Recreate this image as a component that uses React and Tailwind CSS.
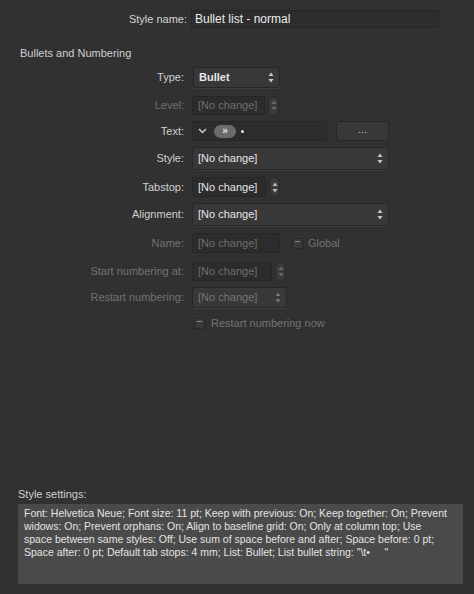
import React from 'react';

const font = { fontFamily: '"Liberation Sans", Arial, sans-serif' };

function UpDown({ className = '' }) {
    return (
        <svg width="6" height="11" viewBox="0 0 6 11" className={className}>
            <path d="M3 0.5 L5.5 4 L0.5 4 Z" fill="currentColor" />
            <path d="M3 10.5 L5.5 7 L0.5 7 Z" fill="currentColor" />
        </svg>
    );
}

function Stepper({ disabled }) {
    return (
        <div className={`ml-[3px] flex h-[20px] w-[11px] items-center justify-center rounded-full border border-[#282828] bg-[#3a3a3a] ${disabled ? 'text-[#6a6a6a]' : 'text-[#bdbdbd]'}`}>
            <UpDown />
        </div>
    );
}

function Checkbox({ disabled }) {
    return (
        <div className={`flex h-[11px] w-[11px] items-start justify-center rounded-[2px] border border-[#262626] bg-[#3a3a3a] pt-[2px]`}>
            <div className={`h-[1px] w-[5px] ${disabled ? 'bg-[#8a8a8a]' : 'bg-[#cfcfcf]'}`} />
        </div>
    );
}

function Row({ label, disabled, top, height, children }) {
    return (
        <div className={`flex items-center ${top} ${height}`}>
            <div className={`w-[185px] shrink-0 pr-[1px] text-right ${disabled ? 'text-[#727272]' : 'text-[#cfcfcf]'}`}>{label}</div>
            <div className="ml-[7px] flex h-full items-center">{children}</div>
        </div>
    );
}

function Popup({ value, width, disabled }) {
    return (
        <div className={`flex h-full ${width} items-center justify-between rounded-[3px] border border-[#262626] bg-[#383838] pl-[5px] pr-[5px] shadow-[0_1px_0_#3e3e3e] ${disabled ? 'text-[#747474]' : 'text-[#e6e6e6]'}`}>
            <span>{value}</span>
            <UpDown className={disabled ? 'text-[#747474]' : 'text-[#c8c8c8]'} />
        </div>
    );
}

function Field({ value, width, disabled }) {
    return (
        <div className={`flex h-full ${width} items-center rounded-[2px] border border-[#262626] bg-[#2c2c2c] pl-[5px] ${disabled ? 'text-[#6e6e6e]' : 'text-[#e6e6e6]'}`}>
            {value}
        </div>
    );
}

export default function App() {
    return (
        <div className="flex h-[594px] w-[474px] flex-col overflow-hidden bg-[#313131] text-[11px] leading-none" style={font}>
            <div className="mt-[10px] flex h-[18px] items-center">
                <div className="w-[187px] shrink-0 text-right text-[#d4d4d4]">Style name:</div>
                <div className="ml-[4px] flex h-full w-[248px] items-center border border-[#262626] bg-[#2d2d2d] pl-[3px] text-[12px] text-[#ececec]">Bullet list - normal</div>
            </div>

            <div className="ml-[20px] mt-[20px] text-[#d0d0d0]">Bullets and Numbering</div>

            <Row label="Type:" top="mt-[8px]" height="h-[21px]">
                <Popup value={<span className="font-bold">Bullet</span>} width="w-[87px] ml-[1px]" />
            </Row>

            <Row label="Level:" disabled top="mt-[8px]" height="h-[19px]">
                <Field value="[No change]" width="w-[73px]" disabled />
                <Stepper disabled />
            </Row>

            <Row label="Text:" top="mt-[6px]" height="h-[20px]">
                <div className="flex h-full w-[135px] items-center rounded-[2px] border border-[#262626] bg-[#2c2c2c] pl-[5px]">
                    <svg width="9" height="6" viewBox="0 0 9 6" className="text-[#d0d0d0]">
                        <path d="M1 1 L4.5 4.5 L8 1" stroke="currentColor" strokeWidth="1.4" fill="none" />
                    </svg>
                    <div className="ml-[7px] flex h-[13px] w-[22px] items-center justify-center rounded-full bg-[#6b6b6b] pb-[1px] text-[10px] font-bold text-[#e4e4e4]">»</div>
                    <div className="ml-[5px] h-[3px] w-[3px] rounded-full bg-[#e8e8e8]" />
                </div>
                <div className="ml-[9px] flex h-full w-[53px] items-center justify-center rounded-[3px] border border-[#262626] bg-[#383838] pb-[4px] text-[#bdbdbd]">...</div>
            </Row>

            <Row label="Style:" top="mt-[6px]" height="h-[23px]">
                <Popup value="[No change]" width="w-[197px]" />
            </Row>

            <Row label="Tabstop:" top="mt-[7px]" height="h-[20px]">
                <Field value="[No change]" width="w-[74px]" />
                <Stepper />
            </Row>

            <Row label="Alignment:" top="mt-[6px]" height="h-[23px]">
                <Popup value="[No change]" width="w-[197px]" />
            </Row>

            <Row label="Name:" disabled top="mt-[7px]" height="h-[20px]">
                <Field value="[No change]" width="w-[88px]" disabled />
                <div className="ml-[12px]"><Checkbox disabled /></div>
                <span className="ml-[5px] text-[#727272]">Global</span>
            </Row>

            <Row label="Start numbering at:" disabled top="mt-[9px]" height="h-[19px]">
                <Field value="[No change]" width="w-[80px]" disabled />
                <Stepper disabled />
            </Row>

            <Row label="Restart numbering:" disabled top="mt-[6px]" height="h-[21px]">
                <Popup value="[No change]" width="w-[95px]" disabled />
            </Row>

            <div className="ml-[194px] mt-[10px] flex items-center">
                <Checkbox disabled />
                <span className="ml-[6px] text-[#747474]">Restart numbering now</span>
            </div>

            <div className="ml-[18px] mt-[160px] text-[#cfcfcf]">Style settings:</div>
            <div className="ml-[18px] mt-[4px] h-[80px] w-[445px] whitespace-nowrap bg-[#4a4a4a] pl-[6px] pr-[4px] pt-[3px] text-[10.5px] leading-[13px] text-[#e4e4e4]">
                Font: Helvetica Neue; Font size: 11 pt; Keep with previous: On; Keep together: On; Prevent<br />
                widows: On; Prevent orphans: On; Align to baseline grid: On; Only at column top; Use<br />
                space between same styles: Off; Use sum of space before and after; Space before: 0 pt;<br />
                Space after: 0 pt; Default tab stops: 4 mm; List: Bullet; List bullet string: "\t•&nbsp;&nbsp;&nbsp;&nbsp;&nbsp;"
            </div>
        </div>
    );
}
